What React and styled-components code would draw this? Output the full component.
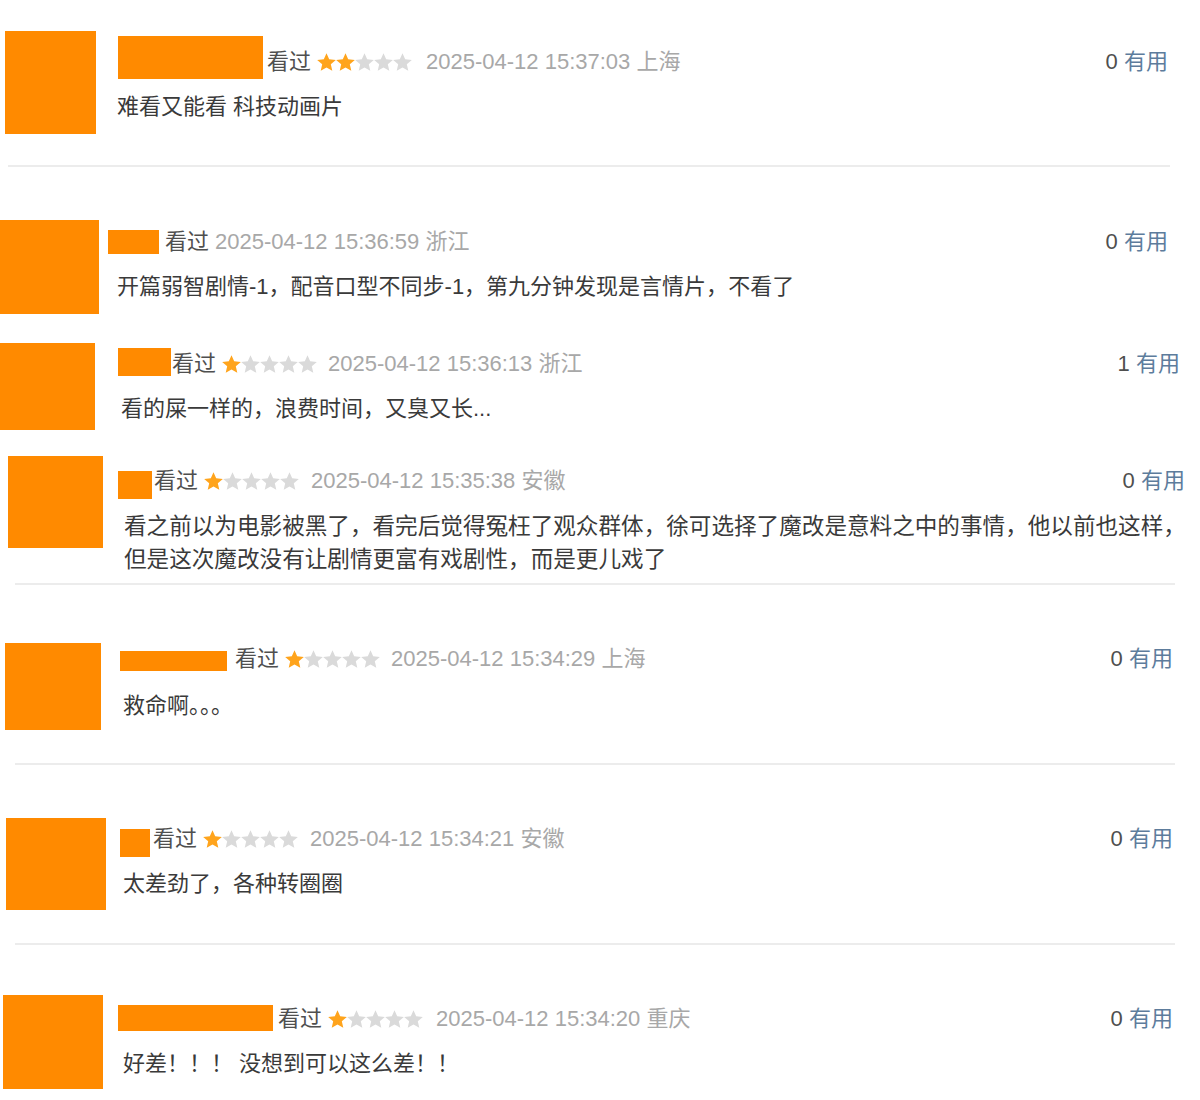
import React from 'react'
import styled, { createGlobalStyle } from 'styled-components';

const Global = createGlobalStyle`
  body {
    margin: 0;
    background: #fff;
    font-family: "Liberation Sans", "Noto Sans CJK SC", sans-serif;
  }
`;

const Page = styled.div`
  width: 1200px;
  display: flex;
  flex-direction: column;
  padding-top: 31px;
`;

const Entry = styled.div`
  display: flex;
  align-items: flex-start;
  height: ${p => p.$h}px;
  margin-top: ${p => p.$mt || 0}px;
  padding-left: ${p => p.$x}px;
`;

const Avatar = styled.div`
  flex: none;
  width: ${p => p.$w}px;
  height: ${p => p.$h}px;
  background: #ff8a00;
`;

const Main = styled.div`
  flex: 1;
  min-width: 0;
  display: flex;
  flex-direction: column;
  margin-left: ${p => p.$ml}px;
  padding-right: ${p => p.$pr}px;
`;

const Header = styled.div`
  display: flex;
  align-items: center;
  height: 28px;
  margin-top: ${p => p.$mt}px;
  font-size: 22px;
  line-height: 28px;
  white-space: nowrap;
`;

const NameBlock = styled.div`
  flex: none;
  align-self: flex-start;
  width: ${p => p.$w}px;
  height: ${p => p.$h}px;
  margin-top: ${p => p.$mt}px;
  margin-right: ${p => p.$mr}px;
  background: #ff8a00;
`;

const Watched = styled.span`
  color: #4f4f4f;
  margin-right: 6px;
`;

const StarRow = styled.span`
  display: flex;
  margin-right: ${p => p.$mr}px;
`;

const Time = styled.span`
  color: #a8a8a8;
`;

const Useful = styled.span`
  margin-left: auto;
  color: #4f4f4f;
`;

const UsefulLink = styled.span`
  color: #5d7c9c;
`;

const Comment = styled.div`
  margin-top: ${p => p.$mt}px;
  margin-left: ${p => p.$indent}px;
  font-size: ${p => p.$fs || 22}px;
  line-height: ${p => p.$lh || 28}px;
  color: #3a3a3a;
  white-space: pre;
`;

const Divider = styled.div`
  height: 2px;
  background: #ececec;
  width: ${p => p.$w}px;
  margin-left: ${p => p.$x}px;
`;

function Star({ on }) {
  return (
    <svg width="19" height="18" viewBox="1 1 22 20.5">
      <path
        d="M12 1l3.1 7.1 7.7.7-5.8 5.1 1.7 7.6L12 17.6 5.3 21.5 7 13.9 1.2 8.8l7.7-.7z"
        fill={on ? '#ffa41c' : '#dadada'}
      />
    </svg>
  );
}

function Stars({ n, mr }) {
  return (
    <StarRow $mr={mr}>
      {[0, 1, 2, 3, 4].map(i => <Star key={i} on={i < n} />)}
    </StarRow>
  );
}

const entries = [
  {
    x: 5, h: 134, av: [91, 103], ml: 22, pr: 32, hmt: 17,
    name: { w: 145, h: 43, mt: -12, mr: 4 }, stars: 2, smr: 14,
    time: '2025-04-12 15:37:03 上海', useful: 0,
    text: '难看又能看 科技动画片', cmt: 17, indent: -1,
    divider: { x: 8, w: 1162 },
  },
  {
    mt: 53, x: 0, h: 123, av: [99, 94], ml: 9, pr: 32, hmt: 8,
    name: { w: 51, h: 24, mt: 2, mr: 6 }, stars: null,
    time: '2025-04-12 15:36:59 浙江', useful: 0,
    text: '开篇弱智剧情-1，配音口型不同步-1，第九分钟发现是言情片，不看了', cmt: 17, indent: 9,
  },
  {
    x: 0, h: 113, av: [95, 87], ml: 23, pr: 20, hmt: 7,
    name: { w: 53, h: 28, mt: -2, mr: 1 }, stars: 1, smr: 11,
    time: '2025-04-12 15:36:13 浙江', useful: 1,
    text: '看的屎一样的，浪费时间，又臭又长...', cmt: 17, indent: 3,
  },
  {
    x: 8, h: 127, av: [95, 92], ml: 15, pr: 15, hmt: 11,
    name: { w: 34, h: 28, mt: 4, mr: 2 }, stars: 1, smr: 12,
    time: '2025-04-12 15:35:38 安徽', useful: 0,
    text: '看之前以为电影被黑了，看完后觉得冤枉了观众群体，徐可选择了魔改是意料之中的事情，他以前也这样，\n但是这次魔改没有让剧情更富有戏剧性，而是更儿戏了',
    cmt: 15, indent: 6, fs: 22.6, lh: 33,
    divider: { x: 15, w: 1160 },
  },
  {
    mt: 58, x: 5, h: 120, av: [96, 87], ml: 19, pr: 27, hmt: 2,
    name: { w: 107, h: 20, mt: 6, mr: 8 }, stars: 1, smr: 11,
    time: '2025-04-12 15:34:29 上海', useful: 0,
    text: '救命啊。。。', cmt: 19, indent: 3,
    divider: { x: 15, w: 1160 },
  },
  {
    mt: 53, x: 6, h: 125, av: [100, 92], ml: 14, pr: 27, hmt: 7,
    name: { w: 30, h: 28, mt: 4, mr: 3 }, stars: 1, smr: 12,
    time: '2025-04-12 15:34:21 安徽', useful: 0,
    text: '太差劲了，各种转圈圈', cmt: 17, indent: 3,
    divider: { x: 15, w: 1160 },
  },
  {
    mt: 50, x: 3, h: 105, av: [100, 94], ml: 15, pr: 27, hmt: 10,
    name: { w: 155, h: 26, mt: 0, mr: 5 }, stars: 1, smr: 13,
    time: '2025-04-12 15:34:20 重庆', useful: 0,
    text: '好差！！！ 没想到可以这么差！！', cmt: 17, indent: 5,
  },
];

function Review({ e }) {
  return (
    <>
      <Entry $h={e.h} $mt={e.mt} $x={e.x}>
        <Avatar $w={e.av[0]} $h={e.av[1]} />
        <Main $ml={e.ml} $pr={e.pr}>
          <Header $mt={e.hmt}>
            <NameBlock $w={e.name.w} $h={e.name.h} $mt={e.name.mt} $mr={e.name.mr} />
            <Watched>看过</Watched>
            {e.stars != null && <Stars n={e.stars} mr={e.smr} />}
            <Time>{e.time}</Time>
            <Useful>{e.useful} <UsefulLink>有用</UsefulLink></Useful>
          </Header>
          <Comment $mt={e.cmt} $indent={e.indent} $fs={e.fs} $lh={e.lh}>{e.text}</Comment>
        </Main>
      </Entry>
      {e.divider && <Divider $x={e.divider.x} $w={e.divider.w} />}
    </>
  );
}

export default function App() {
  return (
    <Page>
      <Global />
      {entries.map((e, i) => <Review key={i} e={e} />)}
    </Page>
  );
}
